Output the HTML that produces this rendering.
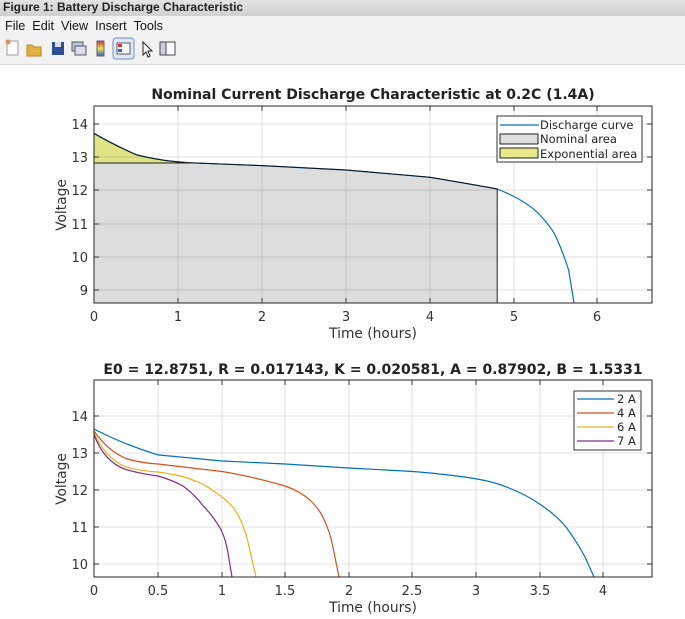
<!DOCTYPE html>
<html><head><meta charset="utf-8"><style>
body{margin:0;width:685px;height:619px;overflow:hidden;background:#fff;font-family:"Liberation Sans",sans-serif;}
#tb{position:absolute;left:0;top:0;width:685px;height:16px;background:linear-gradient(#e4e4e4,#cfcfcf);font-weight:bold;font-size:12px;line-height:15px;padding-left:3px;box-sizing:border-box;color:#222}
#mb{position:absolute;left:0;top:16px;width:685px;height:20px;background:#f2f2f2;font-size:12.6px;line-height:20px;color:#111}
#mb span{margin-left:5px;margin-right:2px}
#tl{position:absolute;left:0;top:36px;width:685px;height:28px;background:#f2f2f2;border-bottom:1px solid #d8d8d8}
svg text{font-family:"DejaVu Sans",sans-serif;}
</style></head><body>
<div id="tb">Figure 1: Battery Discharge Characteristic</div>
<div id="mb"><span>File</span><span>Edit</span><span>View</span><span>Insert</span><span>Tools</span></div>
<div id="tl">
<svg width="200" height="28">
<rect x="7" y="5" width="11" height="14" fill="#fff" stroke="#999"/><circle cx="8" cy="6" r="2.5" fill="#e85"/>
<path d="M27 9h5l2 2h7v9h-14z" fill="#e7b340" stroke="#b88420"/>
<rect x="52" y="6" width="12" height="13" fill="#2b4d9a"/><rect x="55" y="6" width="6" height="5" fill="#ddd"/>
<rect x="72" y="6" width="11" height="9" fill="#bcc6d8" stroke="#556"/><rect x="75" y="10" width="11" height="9" fill="#dde" stroke="#556"/>
<rect x="97" y="5" width="7" height="15" fill="url(#g)" stroke="#666"/>
<defs><linearGradient id="g" x1="0" y1="0" x2="0" y2="1"><stop offset="0" stop-color="#c33"/><stop offset=".5" stop-color="#ed5"/><stop offset="1" stop-color="#36c"/></linearGradient></defs>
<rect x="113" y="2" width="21" height="21" rx="3" fill="#dfe7f5" stroke="#6f8fc8"/>
<rect x="117" y="7" width="13" height="11" fill="#fff" stroke="#556"/><rect x="118" y="8" width="4" height="3" fill="#d33"/><rect x="118" y="13" width="4" height="3" fill="#36c"/>
<path d="M143 6v13l3-3 2 5 2-1-2-5h4z" fill="#fff" stroke="#222"/>
<rect x="160" y="6" width="15" height="13" fill="#fff" stroke="#445"/><rect x="160" y="6" width="6" height="13" fill="#ccd" stroke="#445"/>
</svg></div>
<svg style="position:absolute;left:0;top:0" width="685" height="619" stroke-linejoin="round">
<!-- plot 1 -->
<text x="373" y="99" font-size="14" font-weight="bold" text-anchor="middle" fill="#222">Nominal Current Discharge Characteristic at 0.2C (1.4A)</text>
<rect x="94" y="106" width="558" height="197" fill="#fff"/>
<path d="M94 163H190L262 165.6L346 170L430 177.3L497.2 189V303H94Z" fill="#dcdddd"/>
<path d="M94 163V133.3Q112 144 136 154.6Q160 161 190 162.8L194 163Z" fill="#dfe384"/>
<g stroke="#000" stroke-opacity=".12" stroke-width="1">
<path d="M178 106V303M262 106V303M346 106V303M430 106V303M514 106V303M597 106V303"/>
<path d="M94 124H652M94 157H652M94 190H652M94 224H652M94 257H652M94 290H652"/>
</g>
<path d="M94 133.3Q112 144 136 154.6Q160 161 190 162.8L262 165.6L346 170L430 177.3Q470 184 497.2 189Q525 200 539 214Q552 228 556 237Q563 252 568.6 270L574 303" fill="none" stroke="#0072bd" stroke-width="1.2"/>
<path d="M94 133.3Q112 144 136 154.6Q160 161 190 162.8L262 165.6L346 170L430 177.3Q470 184 497.2 189" fill="none" stroke="#111" stroke-width="1"/>
<path d="M94 163H194M497.2 189V303" stroke="#222" fill="none"/>
<g stroke="#333"><path d="M94 124h5M94 157h5M94 190h5M94 224h5M94 257h5M94 290h5M652 124h-5M652 157h-5M652 190h-5M652 224h-5M652 257h-5M652 290h-5M178 303v-5M262 303v-5M346 303v-5M430 303v-5M514 303v-5M597 303v-5M178 106v5M262 106v5M346 106v5M430 106v5M514 106v5M597 106v5"/></g>
<rect x="94" y="106" width="558" height="197" fill="none" stroke="#262626"/>
<g font-size="13" fill="#333" text-anchor="end"><text x="88" y="129">14</text><text x="88" y="162">13</text><text x="88" y="195">12</text><text x="88" y="229">11</text><text x="88" y="262">10</text><text x="88" y="295">9</text></g>
<g font-size="13" fill="#333" text-anchor="middle"><text x="94" y="321">0</text><text x="178" y="321">1</text><text x="262" y="321">2</text><text x="346" y="321">3</text><text x="430" y="321">4</text><text x="514" y="321">5</text><text x="597" y="321">6</text>
<text x="373" y="338" font-size="13.8">Time (hours)</text>
<text transform="translate(66 205) rotate(-90)" font-size="13.8">Voltage</text></g>
<rect x="497" y="116" width="145" height="46" fill="#fff" stroke="#333"/>
<path d="M500 125H539" stroke="#0072bd" stroke-width="1.2"/>
<rect x="500" y="134" width="38" height="10" fill="#dcdddd" stroke="#222"/>
<rect x="500" y="148" width="38" height="10" fill="#e8ea8a" stroke="#222"/>
<g font-size="11.5" fill="#222"><text x="540" y="129">Discharge curve</text><text x="540" y="143">Nominal area</text><text x="540" y="158">Exponential area</text></g>
<!-- plot 2 -->
<text x="373" y="374" font-size="14" font-weight="bold" text-anchor="middle" fill="#222">E0 = 12.8751, R = 0.017143, K = 0.020581, A = 0.87902, B = 1.5331</text>
<g stroke="#000" stroke-opacity=".12">
<path d="M158 380V577M222 380V577M285 380V577M349 380V577M412 380V577M476 380V577M540 380V577M603 380V577"/>
<path d="M94 416H652M94 453H652M94 490H652M94 527H652M94 564H652"/>
</g>
<g fill="none" stroke-width="1.2">
<path d="M94 429Q125 445 158 454.9L222 461L285 464L349 468L413 471.5Q455 475 477 479Q495 482 509 488Q527 495 541 505Q556 515 566 527Q577 542 585 557L594 577" stroke="#0072bd"/>
<path d="M94 431Q108 451 126 458.5Q140 463 158 464L222 471.5Q250 476 285 486Q300 491 311 501Q320 510 324 519.6Q330 532 332.6 545.5L339 577" stroke="#d95319"/>
<path d="M94 432.7Q105 458 126 467Q140 471 158 472Q180 475 190 479Q205 484 215 492Q227 500 234 508.5Q242 520 247 538L256 577" stroke="#edb120"/>
<path d="M94 434.5Q104 462 126 469.6Q142 474 158 476Q172 480 183 486Q194 494 202.5 505Q214 517 221.6 530.7Q226 541 228 553L232 577" stroke="#7e2f8e"/>
</g>
<g stroke="#333"><path d="M94 416h5M94 453h5M94 490h5M94 527h5M94 564h5M652 416h-5M652 453h-5M652 490h-5M652 527h-5M652 564h-5M158 577v-5M222 577v-5M285 577v-5M349 577v-5M412 577v-5M476 577v-5M540 577v-5M603 577v-5M158 380v5M222 380v5M285 380v5M349 380v5M412 380v5M476 380v5M540 380v5M603 380v5"/></g>
<rect x="94" y="380" width="558" height="197" fill="none" stroke="#262626"/>
<g font-size="13" fill="#333" text-anchor="end"><text x="88" y="421">14</text><text x="88" y="458">13</text><text x="88" y="495">12</text><text x="88" y="532">11</text><text x="88" y="569">10</text></g>
<g font-size="13" fill="#333" text-anchor="middle"><text x="94" y="595">0</text><text x="158" y="595">0.5</text><text x="222" y="595">1</text><text x="285" y="595">1.5</text><text x="349" y="595">2</text><text x="412" y="595">2.5</text><text x="476" y="595">3</text><text x="540" y="595">3.5</text><text x="603" y="595">4</text>
<text x="373" y="612" font-size="13.8">Time (hours)</text>
<text transform="translate(66 479) rotate(-90)" font-size="13.8">Voltage</text></g>
<rect x="574" y="391" width="67" height="59" fill="#fff" stroke="#333"/>
<path d="M577 399H614" stroke="#0072bd" stroke-width="1.2"/><path d="M577 413H614" stroke="#d95319" stroke-width="1.2"/><path d="M577 427H614" stroke="#edb120" stroke-width="1.2"/><path d="M577 441H614" stroke="#7e2f8e" stroke-width="1.2"/>
<g font-size="11.5" fill="#222"><text x="617" y="403">2 A</text><text x="617" y="417">4 A</text><text x="617" y="431">6 A</text><text x="617" y="445">7 A</text></g>
</svg>
</body></html>
